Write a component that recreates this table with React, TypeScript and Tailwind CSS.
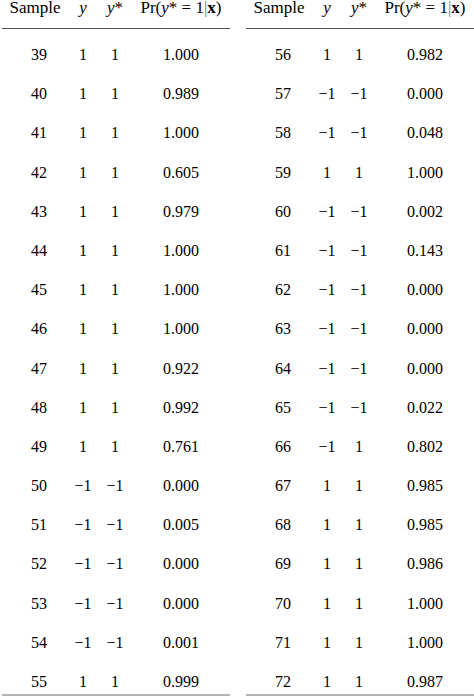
const left: [string, string, string, string][] = [
  ["39", "1", "1", "1.000"],
  ["40", "1", "1", "0.989"],
  ["41", "1", "1", "1.000"],
  ["42", "1", "1", "0.605"],
  ["43", "1", "1", "0.979"],
  ["44", "1", "1", "1.000"],
  ["45", "1", "1", "1.000"],
  ["46", "1", "1", "1.000"],
  ["47", "1", "1", "0.922"],
  ["48", "1", "1", "0.992"],
  ["49", "1", "1", "0.761"],
  ["50", "−1", "−1", "0.000"],
  ["51", "−1", "−1", "0.005"],
  ["52", "−1", "−1", "0.000"],
  ["53", "−1", "−1", "0.000"],
  ["54", "−1", "−1", "0.001"],
  ["55", "1", "1", "0.999"],
];

const right: [string, string, string, string][] = [
  ["56", "1", "1", "0.982"],
  ["57", "−1", "−1", "0.000"],
  ["58", "−1", "−1", "0.048"],
  ["59", "1", "1", "1.000"],
  ["60", "−1", "−1", "0.002"],
  ["61", "−1", "−1", "0.143"],
  ["62", "−1", "−1", "0.000"],
  ["63", "−1", "−1", "0.000"],
  ["64", "−1", "−1", "0.000"],
  ["65", "−1", "−1", "0.022"],
  ["66", "−1", "1", "0.802"],
  ["67", "1", "1", "0.985"],
  ["68", "1", "1", "0.985"],
  ["69", "1", "1", "0.986"],
  ["70", "1", "1", "1.000"],
  ["71", "1", "1", "1.000"],
  ["72", "1", "1", "0.987"],
];

const cols = "grid grid-cols-[66px_30px_34px_98px]";

function HalfTable({ rows }: { rows: [string, string, string, string][] }) {
  return (
    <div className="flex w-[228px] flex-col">
      {/* header */}
      <div className={`${cols} h-[29px] border-b-[1.5px] border-[#555] text-center text-[17px] leading-[16px]`}>
        <span>Sample</span>
        <span className="italic">y</span>
        <span>
          <i>y</i>*
        </span>
        <span className="whitespace-nowrap">
          Pr(<i>y</i>* = 1<span className="text-[#777]">|</span>
          <b>x</b>)
        </span>
      </div>

      {/* rows */}
      <div className="flex flex-col gap-[15.2px] pt-[14px]">
        {rows.map((r) => (
          <div key={r[0]} className={`${cols} h-[24px] items-center text-center leading-[24px]`}>
            <span className="pl-[8px]">{r[0]}</span>
            <span>{r[1]}</span>
            <span>{r[2]}</span>
            <span>{r[3]}</span>
          </div>
        ))}
      </div>

      <div className="h-[2px] bg-[#b4b4b4]" />
    </div>
  );
}

export default function App() {
  return (
    <div className="h-[699px] w-[474px] overflow-hidden bg-white font-['Liberation_Serif','Times_New_Roman',serif] text-[16px] text-[#000]">
      <div className="ml-[2px] flex gap-[16px]">
        <HalfTable rows={left} />
        <HalfTable rows={right} />
      </div>
    </div>
  );
}
